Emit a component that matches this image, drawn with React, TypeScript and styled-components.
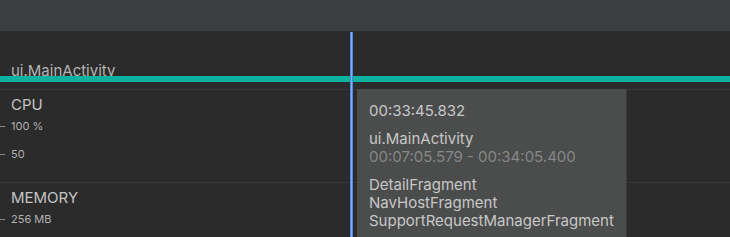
import React from 'react';
import styled, { createGlobalStyle } from 'styled-components';

const GlobalStyle = createGlobalStyle`
  html, body {
    margin: 0;
    padding: 0;
    background: #2b2b2b;
    font-family: Inter, "Noto Sans", "Liberation Sans", sans-serif;
    -webkit-font-smoothing: antialiased;
  }
`;

const Screen = styled.div`
  width: 730px;
  height: 237px;
  overflow: hidden;
  display: flex;
  flex-direction: column;
  background: #2b2b2b;
`;

const TopBar = styled.div`
  height: 31px;
  flex-shrink: 0;
  background: #3c3f41;
`;

const Tracks = styled.div`
  position: relative;
  flex: 1;
`;

const ActivityRow = styled.div`
  height: 59px;
  border-bottom: 1px solid #393939;
  display: flex;
  flex-direction: column;
  justify-content: flex-end;
  padding-bottom: 7px;
  box-sizing: border-box;
`;

const ActivityLabel = styled.div`
  padding-left: 11px;
  font-size: 15px;
  line-height: 11px;
  color: #b4b4b4;
`;

const ActivityBar = styled.div`
  position: relative;
  height: 6px;
  background: #0fb29e;
`;

const MonitorRow = styled.div<{ $height: number }>`
  height: ${({ $height }) => $height}px;
  border-bottom: 1px solid #393939;
  padding-top: 6px;
  box-sizing: border-box;
`;

const MonitorTitle = styled.div`
  padding-left: 11px;
  font-size: 15px;
  line-height: 18px;
  color: #c4c4c4;
  margin-bottom: 5px;
`;

const ScaleTick = styled.div<{ $gap?: number }>`
  position: relative;
  padding-left: 11px;
  font-size: 11px;
  line-height: 14px;
  color: #b0b0b0;
  margin-bottom: ${({ $gap }) => $gap ?? 0}px;

  &::before {
    content: '';
    position: absolute;
    left: 0;
    top: 7px;
    width: 5px;
    height: 1px;
    background: #8a8a8a;
  }
`;

const Cursor = styled.div`
  position: absolute;
  left: 350px;
  top: 1px;
  bottom: 0;
  width: 3px;
  background: linear-gradient(90deg, #4c88df 0 1px, #7fb2ff 1px 2px, #4c88df 2px 3px);
`;

const Tooltip = styled.div`
  position: absolute;
  left: 357px;
  top: 58px;
  width: 270px;
  bottom: -20px;
  box-sizing: border-box;
  background: #4b4c4c;
  border-right: 1px solid #3c3c3c;
  padding: 13px 12px;
  font-size: 15px;
  line-height: 18px;
  color: #c8c8c8;
`;

const TooltipSection = styled.div`
  margin-top: 10px;
`;

const TooltipLine = styled.div<{ $muted?: boolean }>`
  white-space: nowrap;
  color: ${({ $muted }) => ($muted ? '#868787' : '#c8c8c8')};
`;

const fragments = ['DetailFragment', 'NavHostFragment', 'SupportRequestManagerFragment'];

export default function App() {
  return (
    <>
      <GlobalStyle />
      <Screen>
        <TopBar />
        <Tracks>
          <ActivityRow>
            <ActivityLabel>ui.MainActivity</ActivityLabel>
            <ActivityBar />
          </ActivityRow>
          <MonitorRow $height={93}>
            <MonitorTitle>CPU</MonitorTitle>
            <ScaleTick $gap={14}>100 %</ScaleTick>
            <ScaleTick>50</ScaleTick>
          </MonitorRow>
          <MonitorRow $height={80}>
            <MonitorTitle>MEMORY</MonitorTitle>
            <ScaleTick>256 MB</ScaleTick>
          </MonitorRow>
          <Cursor />
          <Tooltip>
            <TooltipLine>00:33:45.832</TooltipLine>
            <TooltipSection>
              <TooltipLine>ui.MainActivity</TooltipLine>
              <TooltipLine $muted>00:07:05.579 - 00:34:05.400</TooltipLine>
            </TooltipSection>
            <TooltipSection>
              {fragments.map((f) => (
                <TooltipLine key={f}>{f}</TooltipLine>
              ))}
            </TooltipSection>
          </Tooltip>
        </Tracks>
      </Screen>
    </>
  );
}
